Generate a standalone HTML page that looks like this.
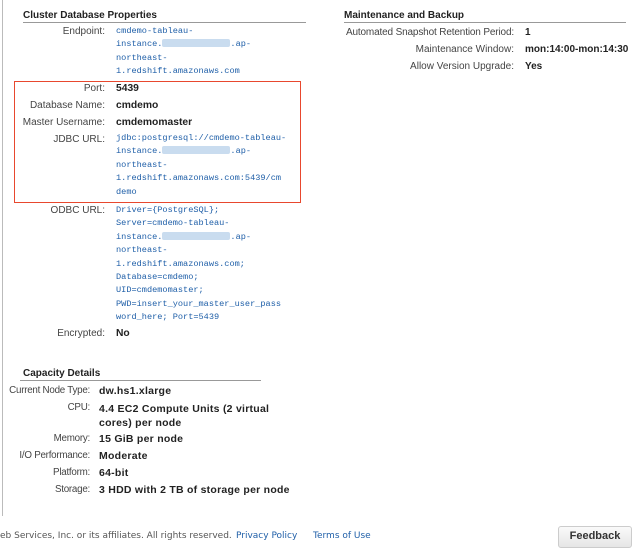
<!DOCTYPE html>
<html><head><meta charset="utf-8"><style>
*{margin:0;padding:0;box-sizing:border-box}
body{width:640px;height:545px;background:#fff;position:relative;overflow:hidden;font-family:"Liberation Sans",sans-serif;font-size:10px;color:#333}
.a{position:absolute;white-space:nowrap}
.h{font-weight:bold;font-size:10px;color:#222}
.line{position:absolute;height:1px;background:#999}
.l{text-align:right;color:#444}
.v{font-weight:bold;color:#222;font-size:10.3px}
.cl{font-size:9.8px;letter-spacing:-0.25px}
.cv{font-size:10.5px;letter-spacing:0.25px}
.m{font-family:"Liberation Mono",monospace;font-size:8.6px;color:#1f5fa8;line-height:13.4px}
.blur{display:inline-block;width:68px;height:8px;background:#c9dcef;vertical-align:-1px;border-radius:2px}
</style></head><body>
<div style="position:absolute;left:2px;top:0;width:1px;height:516px;background:#bbb"></div>

<div class="a h" style="left:23px;top:10px">Cluster Database Properties</div>
<div class="line" style="left:23px;top:22px;width:283px"></div>

<div class="a l" style="right:535px;top:26px">Endpoint:</div>
<div class="a m" style="left:116px;top:25px">cmdemo-tableau-<br>instance.<span class="blur"></span>.ap-<br>northeast-<br>1.redshift.amazonaws.com</div>

<div style="position:absolute;left:14px;top:81px;width:287px;height:122px;border:1.5px solid #e8482e"></div>
<div class="a l" style="right:535px;top:83px">Port:</div>
<div class="a v" style="left:116px;top:83px">5439</div>
<div class="a l" style="right:535px;top:100px">Database Name:</div>
<div class="a v" style="left:116px;top:100px">cmdemo</div>
<div class="a l" style="right:535px;top:117px">Master Username:</div>
<div class="a v" style="left:116px;top:117px">cmdemomaster</div>
<div class="a l" style="right:535px;top:134px">JDBC URL:</div>
<div class="a m" style="left:116px;top:132px">jdbc:postgresql://cmdemo-tableau-<br>instance.<span class="blur"></span>.ap-<br>northeast-<br>1.redshift.amazonaws.com:5439/cm<br>demo</div>

<div class="a l" style="right:535px;top:205px">ODBC URL:</div>
<div class="a m" style="left:116px;top:204px">Driver={PostgreSQL};<br>Server=cmdemo-tableau-<br>instance.<span class="blur"></span>.ap-<br>northeast-<br>1.redshift.amazonaws.com;<br>Database=cmdemo;<br>UID=cmdemomaster;<br>PWD=insert_your_master_user_pass<br>word_here; Port=5439</div>
<div class="a l" style="right:535px;top:328px">Encrypted:</div>
<div class="a v" style="left:116px;top:328px">No</div>

<div class="a h" style="left:23px;top:368px">Capacity Details</div>
<div class="line" style="left:20px;top:380px;width:241px"></div>
<div class="a l cl" style="right:550px;top:385px">Current Node Type:</div>
<div class="a v cv" style="left:99px;top:385px">dw.hs1.xlarge</div>
<div class="a l cl" style="right:550px;top:402px">CPU:</div>
<div class="a v cv" style="left:99px;top:402px;line-height:14px">4.4 EC2 Compute Units (2 virtual<br>cores) per node</div>
<div class="a l cl" style="right:550px;top:433px">Memory:</div>
<div class="a v cv" style="left:99px;top:433px">15 GiB per node</div>
<div class="a l cl" style="right:550px;top:450px">I/O Performance:</div>
<div class="a v cv" style="left:99px;top:450px">Moderate</div>
<div class="a l cl" style="right:550px;top:467px">Platform:</div>
<div class="a v cv" style="left:99px;top:467px">64-bit</div>
<div class="a l cl" style="right:550px;top:484px">Storage:</div>
<div class="a v cv" style="left:99px;top:484px">3 HDD with 2 TB of storage per node</div>

<div class="a h" style="left:344px;top:10px">Maintenance and Backup</div>
<div class="line" style="left:344px;top:22px;width:282px"></div>
<div class="a l" style="right:126px;top:27px;letter-spacing:-0.15px">Automated Snapshot Retention Period:</div>
<div class="a v" style="left:525px;top:27px;font-size:10px">1</div>
<div class="a l" style="right:126px;top:44px">Maintenance Window:</div>
<div class="a v" style="left:525px;top:44px;font-size:10px">mon:14:00-mon:14:30</div>
<div class="a l" style="right:126px;top:61px">Allow Version Upgrade:</div>
<div class="a v" style="left:525px;top:61px;font-size:10px">Yes</div>

<div class="a" style="left:0;top:531px;font-size:9px;color:#555;font-family:'DejaVu Sans',sans-serif">eb Services, Inc. or its affiliates. All rights reserved.</div>
<div class="a" style="left:236px;top:531px;font-size:9px;color:#1f5fa8;font-family:'DejaVu Sans',sans-serif">Privacy Policy</div>
<div class="a" style="left:313px;top:531px;font-size:9px;color:#1f5fa8;font-family:'DejaVu Sans',sans-serif">Terms of Use</div>
<div style="position:absolute;left:558px;top:526px;width:74px;height:22px;border:1px solid #ccc;border-radius:3px;background:linear-gradient(#fafafa,#e6e6e6);font-weight:bold;font-size:11px;color:#333;text-align:center;padding-top:3px">Feedback</div>
</body></html>
